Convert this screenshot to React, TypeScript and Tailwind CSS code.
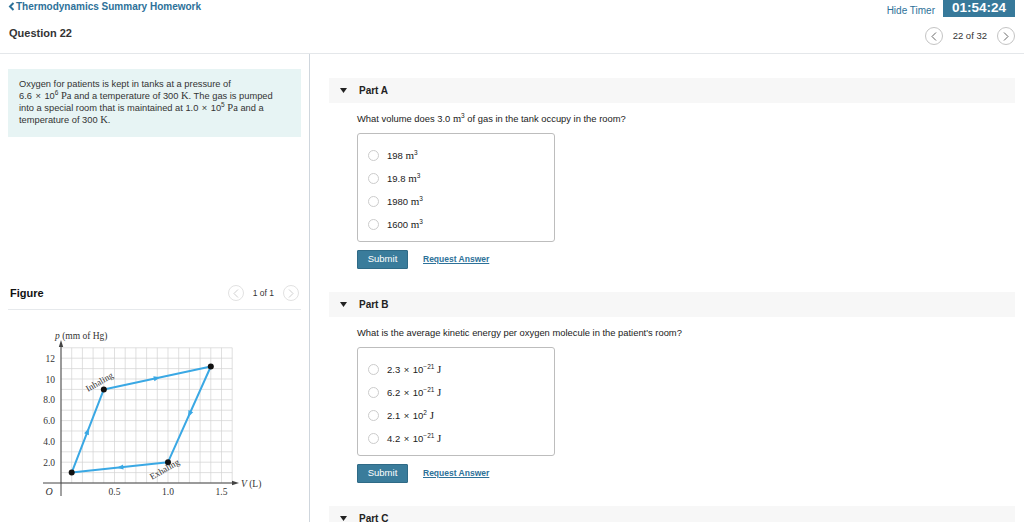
import React from "react";

type Part = {
  title: string;
  question: React.ReactNode;
  options: React.ReactNode[];
};

const Serif = ({ children, size = "md" }: { children: React.ReactNode; size?: "md" | "lg" }) => (
  <span className={`font-['Liberation_Serif',serif] ${size === "lg" ? "text-[11px]" : "text-[10.5px]"}`}>
    {children}
  </span>
);

const Sup = ({ children }: { children: React.ReactNode }) => (
  <sup className="text-[6.5px] -top-[4px]">{children}</sup>
);

const Times = () => <span className="mx-[3.5px]">×</span>;

function ChevronCircle({ dir, size, faint }: { dir: "left" | "right"; size: number; faint?: boolean }) {
  return (
    <div
      className={`flex items-center justify-center rounded-full border ${faint ? "border-[#e2e2e2]" : "border-[#c4c4c4]"}`}
      style={{ width: size, height: size }}
    >
      <svg width="6" height="9" viewBox="0 0 6 9">
        <polyline
          points={dir === "left" ? "5,0.5 1,4.5 5,8.5" : "1,0.5 5,4.5 1,8.5"}
          fill="none"
          stroke={faint ? "#cfcfcf" : "#666"}
          strokeWidth="1"
        />
      </svg>
    </div>
  );
}

function Graph() {
  const X = (v: number) => 31 + v * 107;
  const Y = (p: number) => 163 - p * 10.4;
  const pts: [number, number][] = [
    [0.1, 1.0],
    [0.4, 9.0],
    [1.4, 11.2],
    [1.0, 2.0],
  ];
  const blue = "#3aa8e4";

  const arrows = pts.map((a, i) => {
    const b = pts[(i + 1) % pts.length];
    const x1 = X(a[0]), y1 = Y(a[1]), x2 = X(b[0]), y2 = Y(b[1]);
    const mx = (x1 + x2) / 2, my = (y1 + y2) / 2;
    const ang = (Math.atan2(y2 - y1, x2 - x1) * 180) / Math.PI;
    return (
      <polygon
        key={i}
        points="-3.5,-2.6 3,0 -3.5,2.6"
        fill={blue}
        transform={`translate(${mx} ${my}) rotate(${ang})`}
      />
    );
  });

  return (
    <svg width="270" height="190" className="font-['Liberation_Serif',serif]">
      {/* grid */}
      {Array.from({ length: 17 }).map((_, k) => (
        <line key={"v" + k} x1={X(k / 10)} y1={Y(0)} x2={X(k / 10)} y2={Y(13)} stroke="#d2d2d2" strokeWidth="0.7" />
      ))}
      {Array.from({ length: 14 }).map((_, k) => (
        <line key={"h" + k} x1={X(0)} y1={Y(k)} x2={X(1.6)} y2={Y(k)} stroke="#d2d2d2" strokeWidth="0.7" />
      ))}

      {/* axes */}
      <line x1="31" y1="176" x2="31" y2="25" stroke="#444" strokeWidth="1" />
      <polygon points="31,20 28.8,27 33.2,27" fill="#444" />
      <line x1="13" y1="163" x2="204" y2="163" stroke="#444" strokeWidth="1" />
      <polygon points="209,163 202,160.8 202,165.2" fill="#444" />

      {/* axis labels */}
      <text x="25" y="19" fontSize="9.5" fill="#333">
        <tspan fontStyle="italic">p</tspan> (mm of Hg)
      </text>
      <text x="211" y="166.5" fontSize="9.5" fill="#333">
        <tspan fontStyle="italic">V</tspan> (L)
      </text>
      <text x="19" y="175" fontSize="10" fontStyle="italic" fill="#333" textAnchor="middle">O</text>

      {[
        [12, "12"],
        [10, "10"],
        [8, "8.0"],
        [6, "6.0"],
        [4, "4.0"],
        [2, "2.0"],
      ].map(([p, s]) => (
        <text key={s as string} x="25" y={Y(p as number) + 3.5} fontSize="9.5" fill="#333" textAnchor="end">
          {s}
        </text>
      ))}
      {[
        [0.5, "0.5"],
        [1.0, "1.0"],
        [1.5, "1.5"],
      ].map(([v, s]) => (
        <text key={s as string} x={X(v as number)} y="175" fontSize="9.5" fill="#333" textAnchor="middle">
          {s}
        </text>
      ))}

      {/* cycle */}
      <polygon
        points={pts.map((p) => `${X(p[0])},${Y(p[1])}`).join(" ")}
        fill="none"
        stroke={blue}
        strokeWidth="2"
        strokeLinejoin="round"
      />
      {arrows}
      {pts.map((p, i) => (
        <circle key={i} cx={X(p[0])} cy={Y(p[1])} r="3" fill="#111" />
      ))}

      <text x="58" y="72" fontSize="9" fill="#333" transform="rotate(-30 58 72)">
        Inhaling
      </text>
      <text x="122" y="160" fontSize="9" fill="#333" transform="rotate(-30 122 160)">
        Exhaling
      </text>
    </svg>
  );
}

function PartBlock({ part }: { part: Part }) {
  return (
    <div className="mb-[23px]">
      <div className="h-[25px] bg-[#f7f7f7] flex items-center pl-[11px]">
        <svg width="7" height="5" viewBox="0 0 7 5">
          <polygon points="0,0 7,0 3.5,5" fill="#222" />
        </svg>
        <span className="ml-[12px] text-[10px] font-bold text-[#222]">{part.title}</span>
      </div>
      <div className="pl-[28px]">
        <div className="pt-[10px] text-[9.4px] leading-[12px] text-[#222]">{part.question}</div>
        <div className="mt-[8px] w-[198px] h-[109px] border border-[#bdbdbd] rounded-[3px] pt-[10px] pl-[10px]">
          {part.options.map((o, i) => (
            <div key={i} className="h-[23px] flex items-center">
              <span className="w-[11px] h-[11px] rounded-full border border-[#cccccc] bg-white" />
              <span className="ml-[8px] text-[9.5px] text-[#222]">{o}</span>
            </div>
          ))}
        </div>
        <div className="mt-[8px] flex items-center">
          <button className="w-[51px] h-[19px] bg-[#3a7c9b] border border-[#2f6a86] rounded-[1px] text-white text-[9.5px] flex items-center justify-center">
            Submit
          </button>
          <span className="ml-[15px] text-[8.5px] font-bold text-[#2d7199] underline">Request Answer</span>
        </div>
      </div>
    </div>
  );
}

const parts: Part[] = [
  {
    title: "Part A",
    question: (
      <>
        What volume does 3.0 <Serif>m</Serif>
        <Sup>3</Sup> of gas in the tank occupy in the room?
      </>
    ),
    options: [
      <>198 <Serif size="lg">m</Serif><Sup>3</Sup></>,
      <>19.8 <Serif size="lg">m</Serif><Sup>3</Sup></>,
      <>1980 <Serif size="lg">m</Serif><Sup>3</Sup></>,
      <>1600 <Serif size="lg">m</Serif><Sup>3</Sup></>,
    ],
  },
  {
    title: "Part B",
    question: <>What is the average kinetic energy per oxygen molecule in the patient's room?</>,
    options: [
      <>2.3<Times />10<Sup>−21</Sup> <Serif size="lg">J</Serif></>,
      <>6.2<Times />10<Sup>−21</Sup> <Serif size="lg">J</Serif></>,
      <>2.1<Times />10<Sup>2</Sup> <Serif size="lg">J</Serif></>,
      <>4.2<Times />10<Sup>−21</Sup> <Serif size="lg">J</Serif></>,
    ],
  },
  {
    title: "Part C",
    question: <>What is the root-mean-square speed of the oxygen molecules in the room?</>,
    options: [],
  },
];

export default function App() {
  return (
    <div className="w-[1024px] h-[522px] overflow-hidden bg-white font-['Liberation_Sans',Arial,sans-serif] text-[#222]">
      {/* top bar */}
      <header className="h-[54px] border-b border-[#e4e7ea] flex justify-between">
        <div className="pl-[8px]">
          <div className="flex items-center h-[12px] text-[10px] font-bold text-[#2d7199]">
            <svg width="7" height="9" viewBox="0 0 7 9" className="mr-[1px]">
              <polyline points="5.5,1 2,4.5 5.5,8" fill="none" stroke="#2d7199" strokeWidth="2" />
            </svg>
            Thermodynamics Summary Homework
          </div>
          <div className="mt-[14px] pl-[1px] h-[14px] flex items-center text-[11px] font-bold text-[#333]">
            Question 22
          </div>
        </div>
        <div className="flex flex-col items-end pr-[9px]">
          <div className="flex items-start">
            <span className="mt-[3px] text-[10px] text-[#2d7199]">Hide Timer</span>
            <div className="ml-[8px] w-[72px] h-[17px] bg-[#37799a] text-white font-bold text-[13.5px] flex items-center justify-center">
              01:54:24
            </div>
          </div>
          <div className="mt-[9px] flex items-center">
            <ChevronCircle dir="left" size={18} />
            <span className="mx-[10px] text-[9.5px] text-[#333]">22 of 32</span>
            <ChevronCircle dir="right" size={18} />
          </div>
        </div>
      </header>

      <div className="flex h-[468px]">
        {/* left column */}
        <aside className="w-[310px] shrink-0 border-r border-[#cfd6dd]">
          <div className="mx-[8px] mt-[15px] h-[68px] bg-[#e7f4f4] pl-[11px] pt-[9px] text-[9.3px] leading-[12px] text-[#333]">
            Oxygen for patients is kept in tanks at a pressure of
            <br />
            6.6<Times />10<Sup>6</Sup> <Serif>Pa</Serif> and a temperature of 300 <Serif>K</Serif>. The gas is pumped
            <br />
            into a special room that is maintained at 1.0<Times />10<Sup>5</Sup> <Serif>Pa</Serif> and a
            <br />
            temperature of 300 <Serif>K</Serif>.
          </div>

          <div className="mx-[8px] mt-[146px] h-[27px] border-b border-[#e6e9ec]">
            <div className="h-[20px] flex items-center justify-between pl-[2px] pr-[2px]">
              <span className="text-[11px] font-bold text-[#111]">Figure</span>
              <div className="flex items-center">
                <ChevronCircle dir="left" size={16} faint />
                <span className="mx-[9px] text-[8.5px] text-[#333]">1 of 1</span>
                <ChevronCircle dir="right" size={16} faint />
              </div>
            </div>
          </div>

          <div className="mt-[10px] ml-[30px]">
            <Graph />
          </div>
        </aside>

        {/* right column */}
        <main className="flex-1 pl-[19px] pr-[9px] pt-[24px]">
          {parts.map((p) => (
            <PartBlock key={p.title} part={p} />
          ))}
        </main>
      </div>
    </div>
  );
}
